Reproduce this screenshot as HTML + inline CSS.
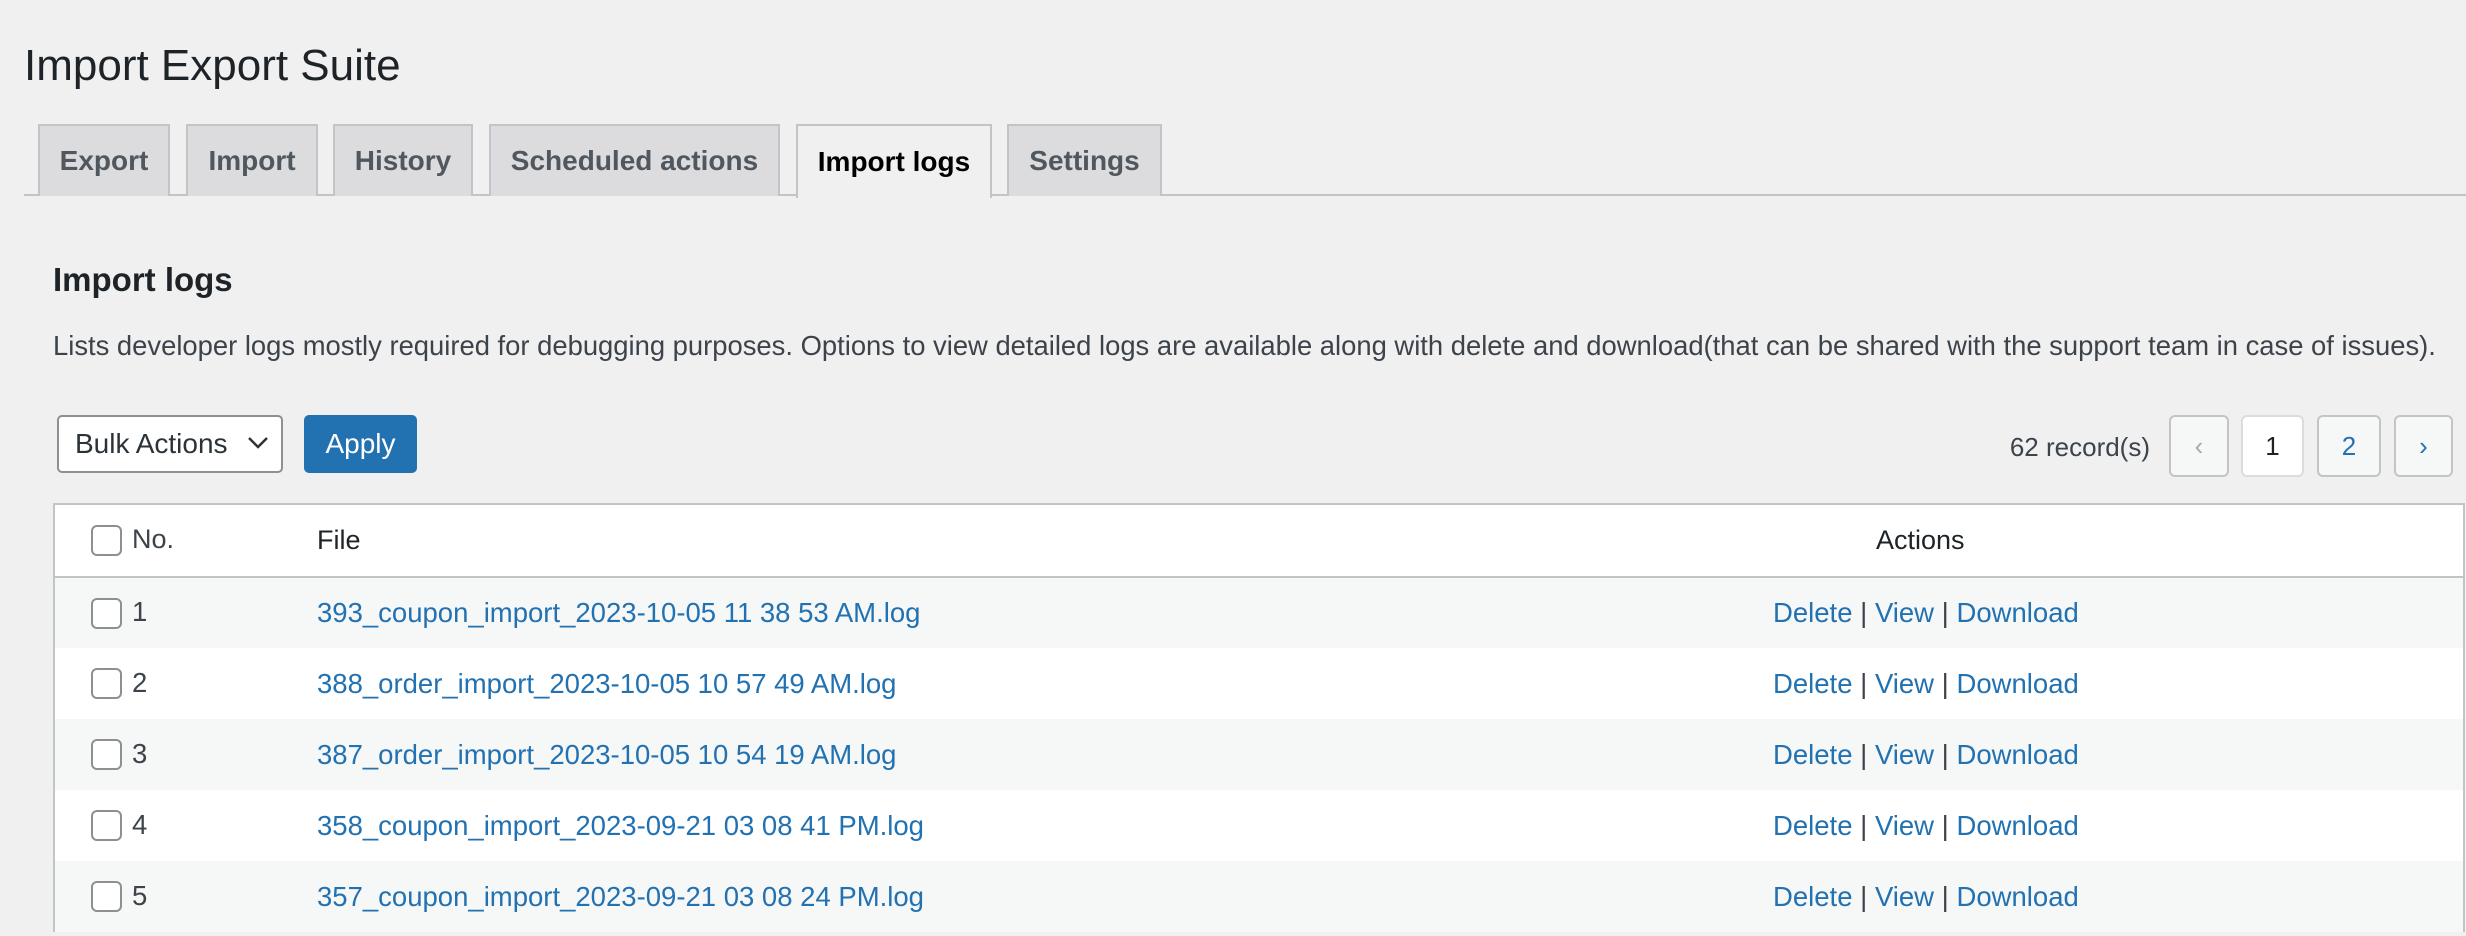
<!DOCTYPE html>
<html><head><meta charset="utf-8"><style>
*{box-sizing:border-box;margin:0;padding:0}
html,body{width:2466px;height:936px;overflow:hidden}
body{background:#f0f0f1;font-family:"Liberation Sans",Arial,sans-serif;color:#3c434a;position:relative}
.a{position:absolute}
h1{position:absolute;left:24px;top:40px;font-size:44px;font-weight:400;color:#1d2327;line-height:52px}
.tabline{left:24px;right:0;top:194px;height:2px;background:#c3c4c7}
.tab{position:absolute;top:124px;height:72px;background:#dcdcde;border:2px solid #c3c4c7;border-bottom:none;font-size:28px;font-weight:700;color:#50575e;display:flex;align-items:center;justify-content:center}
.tab.act{background:#f0f0f1;color:#000;height:74px;z-index:2}
h2{position:absolute;left:53px;top:261px;font-size:33px;font-weight:700;color:#1d2327}
.desc{left:53px;top:330px;font-size:27.4px;color:#3c434a;white-space:nowrap}
.sel{left:57px;top:415px;width:226px;height:58px;border:2px solid #8c8f94;border-radius:5px;background:#fff;font-size:28px;color:#2c3338;padding:0 0 0 16px;line-height:54px}
.btn{left:304px;top:415px;width:113px;height:58px;border-radius:5px;background:#2271b1;color:#fff;font-size:28px;text-align:center;line-height:58px}
.rec{left:1950px;top:432px;width:200px;text-align:right;font-size:26px;color:#3c434a}
.pg{position:absolute;top:415px;height:62px;border:2px solid #c3c4c7;border-radius:6px;background:#f6f7f7;color:#2271b1;font-size:26px;display:flex;align-items:center;justify-content:center}
.wrap{position:absolute;left:53px;top:503px;width:2412px;height:433px;overflow:hidden}
table{width:2412px;border-collapse:collapse;table-layout:fixed;border:2px solid #c3c4c7;border-bottom:none;background:#fff;font-size:27.5px}
th{height:73px;font-weight:400;color:#1d2327;text-align:left;border-bottom:2px solid #c3c4c7;font-size:27px}
td{height:71px}
tr.o td{background:#f6f7f7}
.cb{display:inline-block;width:31px;height:31px;border:2px solid #8c8f94;border-radius:6px;background:#fff;vertical-align:middle;margin-right:10px;position:relative;top:-1px}
a{color:#2271b1;text-decoration:none}
.c1{padding-left:36px;color:#3c434a}
</style></head><body>
<h1>Import Export Suite</h1>
<div class="a tabline"></div>
<div class="tab" style="left:38px;width:132px">Export</div>
<div class="tab" style="left:186px;width:132px">Import</div>
<div class="tab" style="left:333px;width:140px">History</div>
<div class="tab" style="left:489px;width:291px">Scheduled actions</div>
<div class="tab act" style="left:796px;width:196px">Import logs</div>
<div class="tab" style="left:1007px;width:155px">Settings</div>
<h2>Import logs</h2>
<div class="a desc">Lists developer logs mostly required for debugging purposes. Options to view detailed logs are available along with delete and download(that can be shared with the support team in case of issues).</div>
<div class="a sel">Bulk Actions<svg class="a" style="left:188px;top:18px" width="22" height="16" viewBox="0 0 22 16"><path d="M2 3l9 9 9-9" fill="none" stroke="#2c3338" stroke-width="2.5"/></svg></div>
<div class="a btn">Apply</div>
<div class="a rec">62 record(s)</div>
<div class="pg" style="left:2169px;width:60px;color:#a7aaad">‹</div>
<div class="pg" style="left:2241px;width:63px;background:#fff;border-color:#dcdcde;color:#1d2327">1</div>
<div class="pg" style="left:2317px;width:64px">2</div>
<div class="pg" style="left:2394px;width:59px">›</div>
<div class="wrap"><table>
<colgroup><col style="width:263px"><col style="width:1456px"><col></colgroup>
<tr><th class="c1"><span class="cb"></span>No.</th><th>File</th><th style="padding-left:103px">Actions</th></tr>
<tr class="o"><td class="c1"><span class="cb"></span>1</td><td><a>393_coupon_import_2023-10-05 11 38 53 AM.log</a></td><td><a>Delete</a> | <a>View</a> | <a>Download</a></td></tr>
<tr><td class="c1"><span class="cb"></span>2</td><td><a>388_order_import_2023-10-05 10 57 49 AM.log</a></td><td><a>Delete</a> | <a>View</a> | <a>Download</a></td></tr>
<tr class="o"><td class="c1"><span class="cb"></span>3</td><td><a>387_order_import_2023-10-05 10 54 19 AM.log</a></td><td><a>Delete</a> | <a>View</a> | <a>Download</a></td></tr>
<tr><td class="c1"><span class="cb"></span>4</td><td><a>358_coupon_import_2023-09-21 03 08 41 PM.log</a></td><td><a>Delete</a> | <a>View</a> | <a>Download</a></td></tr>
<tr class="o"><td class="c1"><span class="cb"></span>5</td><td><a>357_coupon_import_2023-09-21 03 08 24 PM.log</a></td><td><a>Delete</a> | <a>View</a> | <a>Download</a></td></tr>
</table></div>
</body></html>
